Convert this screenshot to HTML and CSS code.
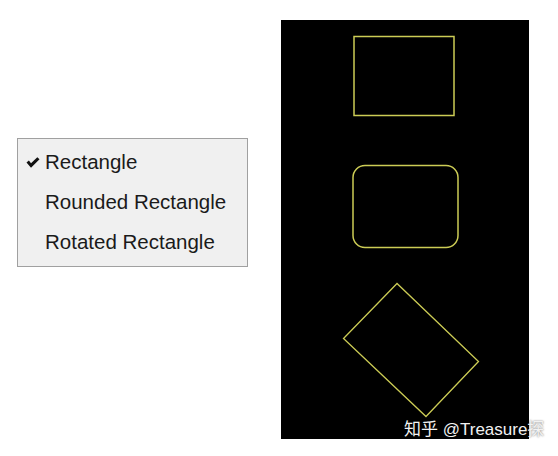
FILE: index.html
```html
<!DOCTYPE html>
<html lang="en">
<head>
    <meta charset="UTF-8">
    <title>Shape Menu</title>
    <link rel="stylesheet" href="styles.css">
</head>
<body>
    <div class="page">
        <div class="menu">
            <div class="item checked">
                <svg class="check" width="14" height="11" viewBox="0 0 14 11">
                    <path d="M0.5 5.6 L2.9 3.6 L5 6.2 L11.3 0.3 L13.5 2.2 L5 10.7 Z" fill="#111"/>
                </svg>
                <span>Rectangle</span>
            </div>
            <div class="item"><span>Rounded Rectangle</span></div>
            <div class="item"><span>Rotated Rectangle</span></div>
        </div>

        <div class="canvas">
            <svg width="248" height="419" viewBox="0 0 248 419">
                <rect x="73" y="16.5" width="100" height="79" fill="none" stroke="#cccc55" stroke-width="1.5"/>
                <rect x="72" y="145.5" width="105" height="82" rx="12" fill="none" stroke="#cccc55" stroke-width="1.5"/>
                <polygon points="116,263.5 62.5,318.5 145,396.5 197.5,341.5" fill="none" stroke="#cccc55" stroke-width="1.3"/>
            </svg>
            <div class="watermark">知乎 @Treasure探</div>
        </div>
    </div>
</body>
</html>
```

FILE: styles.css
```css
body {
    margin: 0;
    background-color: #ffffff;
    font-family: Arial, "Liberation Sans", sans-serif;
}

.page {
    display: flex;
    align-items: flex-start;
    gap: 33px;
    padding: 20px 0 0 17px;
}

.menu {
    width: 229px;
    margin-top: 118px;
    padding: 3px 0 4px 0;
    background-color: #f0f0f0;
    border: 1px solid #a0a0a0;
}

.item {
    position: relative;
    height: 40px;
    line-height: 40px;
    padding-left: 27px;
    font-size: 20.5px;
    color: #1a1a1a;
}

.check {
    position: absolute;
    left: 8px;
    top: 15px;
}

.canvas {
    position: relative;
    width: 248px;
    height: 419px;
    background-color: #000000;
}

.canvas svg {
    display: block;
}

.watermark {
    position: absolute;
    left: 123px;
    top: 401px;
    line-height: 17px;
    white-space: nowrap;
    font-family: "Liberation Sans", "Noto Sans CJK SC", sans-serif;
    font-size: 17px;
    color: #f2f2f2;
    text-shadow: 0 0 2px rgba(0, 0, 0, 0.6);
}
```
